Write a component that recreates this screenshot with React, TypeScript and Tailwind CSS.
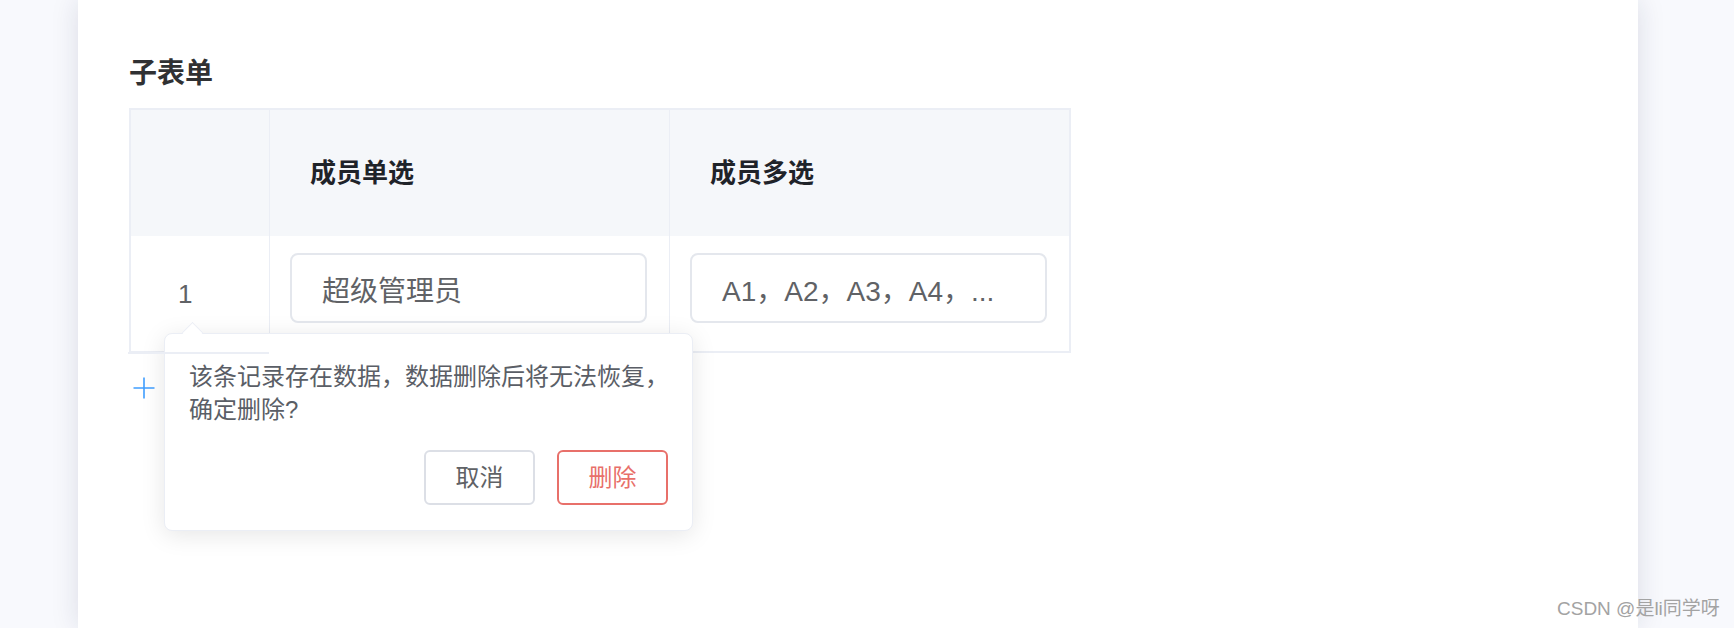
import React from "react";

const font = "font-['Liberation_Sans','Noto_Sans_CJK_SC',sans-serif]";

function PlusIcon() {
  return (
    <svg width="22" height="22" viewBox="0 0 22 22" fill="none">
      <path d="M11 0.5v21M0.5 11h21" stroke="#409eff" strokeWidth="1.6" />
    </svg>
  );
}

function CellInput({ value }: { value: string }) {
  return (
    <div className="ml-[20px] mt-[17px] h-[70px] w-[357px] rounded-[8px] border-2 border-[#e4e7ed] bg-white pl-[30px] pt-[7px] flex items-center">
      <span className="text-[28px] leading-none text-[#606266] whitespace-nowrap">{value}</span>
    </div>
  );
}

function DeletePopover() {
  return (
    <div className="absolute left-[164px] top-[333px] z-10 w-[529px] rounded-[8px] border border-[#ebeef5] bg-white pl-[24px] pr-[24px] pt-[26px] pb-[25px] shadow-[0_4px_24px_rgba(0,0,0,0.1)]">
      {/* arrow */}
      <div className="absolute left-[20px] -top-[9px] h-[15px] w-[15px] rotate-45 border-l border-t border-[#ebeef5] bg-white" />
      <p className="w-[480px] whitespace-nowrap text-[24px] leading-[33px] text-[#5a5e66]">
        该条记录存在数据，数据删除后将无法恢复，
        <br />
        确定删除?
      </p>
      <div className="mt-[24px] flex justify-end gap-[22px]">
        <button className="h-[55px] w-[111px] rounded-[6px] border-2 border-[#dcdfe6] bg-white text-[24px] text-[#606266]">
          取消
        </button>
        <button className="h-[55px] w-[111px] rounded-[6px] border-2 border-[#e8706a] bg-white text-[24px] text-[#e8706a]">
          删除
        </button>
      </div>
    </div>
  );
}

export default function App() {
  return (
    <div className={`relative h-[628px] w-full overflow-hidden bg-[#f8f9fd] pl-[78px] ${font}`}>
      <div className="h-full w-[1560px] bg-white pl-[51px] pt-[54px] shadow-[0_0_26px_rgba(20,30,70,0.13)]">
        <h2 className="text-[28px] font-bold leading-[40px] text-[#303133]">子表单</h2>

        {/* sub table */}
        <div className="mt-[14px] w-[942px] border-2 border-[#ebeef5]">
          <div className="flex h-[126px] bg-[#f5f7fa]">
            <div className="w-[139px] border-r border-[#ebeef5]" />
            <div className="flex w-[400px] items-center border-r border-[#ebeef5] pl-[40px] text-[26px] font-bold text-[#1f2329]">
              成员单选
            </div>
            <div className="flex w-[398px] items-center pl-[40px] text-[26px] font-bold text-[#1f2329]">
              成员多选
            </div>
          </div>
          <div className="flex h-[115px]">
            <div className="flex w-[139px] items-center border-r border-[#ebeef5] pl-[47px] pt-[2px] text-[26px] text-[#606266]">
              1
            </div>
            <div className="w-[400px] border-r border-[#ebeef5]">
              <CellInput value="超级管理员" />
            </div>
            <div className="w-[398px]">
              <CellInput value="A1，A2，A3，A4，..." />
            </div>
          </div>
        </div>

        <div className="ml-[4px] mt-[24px] flex items-center">
          <PlusIcon />
        </div>
      </div>

      <DeletePopover />

      {/* fixed column bottom border drawn above the popover */}
      <div className="absolute left-[128px] top-[352px] z-20 h-[2px] w-[141px] bg-[#ebeef5]" />

      <span className="absolute left-[1557px] top-[599px] text-[19px] leading-[19px] text-[#a3a3a3] whitespace-nowrap">
        CSDN @是li同学呀
      </span>
    </div>
  );
}
